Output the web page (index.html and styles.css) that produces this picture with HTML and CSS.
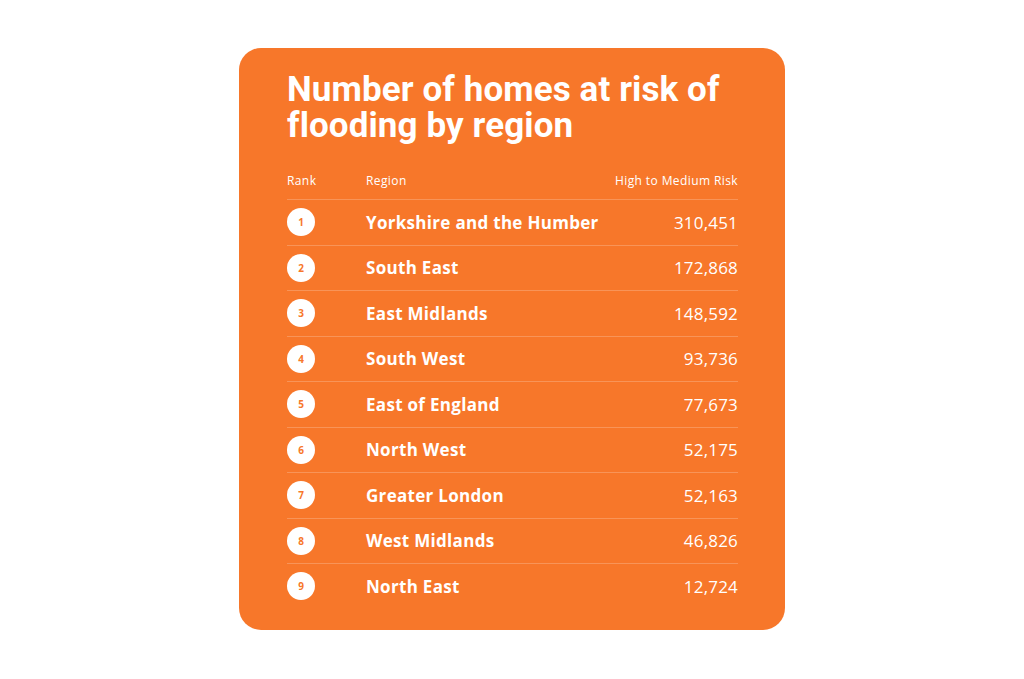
FILE: index.html
```html
<!DOCTYPE html>
<html>
<head>
<meta charset="utf-8">
<link rel="stylesheet" href="styles.css">
</head>
<body>
<div class="page">
  <div class="card">
    <h1 class="title">Number of homes at risk of flooding by region</h1>
    <div class="table">
      <div class="head">
        <span class="c-rank">Rank</span>
        <span class="c-region">Region</span>
        <span class="c-value">High to Medium Risk</span>
      </div>
      <div class="row"><span class="c-rank"><span class="badge">1</span></span><span class="c-region name">Yorkshire and the Humber</span><span class="c-value num">310,451</span></div>
      <div class="row"><span class="c-rank"><span class="badge">2</span></span><span class="c-region name">South East</span><span class="c-value num">172,868</span></div>
      <div class="row"><span class="c-rank"><span class="badge">3</span></span><span class="c-region name">East Midlands</span><span class="c-value num">148,592</span></div>
      <div class="row"><span class="c-rank"><span class="badge">4</span></span><span class="c-region name">South West</span><span class="c-value num">93,736</span></div>
      <div class="row"><span class="c-rank"><span class="badge">5</span></span><span class="c-region name">East of England</span><span class="c-value num">77,673</span></div>
      <div class="row"><span class="c-rank"><span class="badge">6</span></span><span class="c-region name">North West</span><span class="c-value num">52,175</span></div>
      <div class="row"><span class="c-rank"><span class="badge">7</span></span><span class="c-region name">Greater London</span><span class="c-value num">52,163</span></div>
      <div class="row"><span class="c-rank"><span class="badge">8</span></span><span class="c-region name">West Midlands</span><span class="c-value num">46,826</span></div>
      <div class="row"><span class="c-rank"><span class="badge">9</span></span><span class="c-region name">North East</span><span class="c-value num">12,724</span></div>
    </div>
  </div>
</div>
</body>
</html>
```
FILE: styles.css
```css
html, body {
  margin: 0;
  padding: 0;
  background: #ffffff;
}
body {
  width: 1024px;
  height: 679px;
  font-family: "Open Sans", "Liberation Sans", sans-serif;
  color: #ffffff;
}
.page {
  display: flex;
  justify-content: center;
  padding-top: 48px;
}
.card {
  box-sizing: border-box;
  width: 546px;
  height: 582px;
  background: #f7772a;
  border-radius: 22px;
  padding: 24px 47px 0 48px;
}
.title {
  margin: 0;
  font-family: "Roboto", "Liberation Sans", sans-serif;
  font-weight: 700;
  font-size: 35px;
  line-height: 36px;
  letter-spacing: 0.1px;
  width: 451px;
}
.table {
  margin-top: 24px;
}
.head {
  display: flex;
  align-items: center;
  height: 24px;
  font-size: 12px;
  padding-bottom: 7px;
  border-bottom: 1px solid rgba(255,255,255,0.22);
  letter-spacing: 0.4px;
}
.row {
  display: flex;
  align-items: center;
  height: 44.5px;
  border-bottom: 1px solid rgba(255,255,255,0.22);
}
.row:last-child {
  border-bottom: none;
}
.c-rank {
  width: 79px;
  flex: none;
}
.c-region {
  flex: 1;
}
.c-value {
  text-align: right;
}
.badge {
  display: flex;
  align-items: center;
  justify-content: center;
  width: 28px;
  height: 28px;
  border-radius: 50%;
  background: #ffffff;
  color: #f7772a;
  font-size: 10px;
  font-weight: 700;
}
.name {
  font-size: 17px;
  font-weight: 700;
  letter-spacing: 0.3px;
}
.num {
  font-size: 17px;
  font-weight: 400;
  letter-spacing: 0.2px;
}
```
